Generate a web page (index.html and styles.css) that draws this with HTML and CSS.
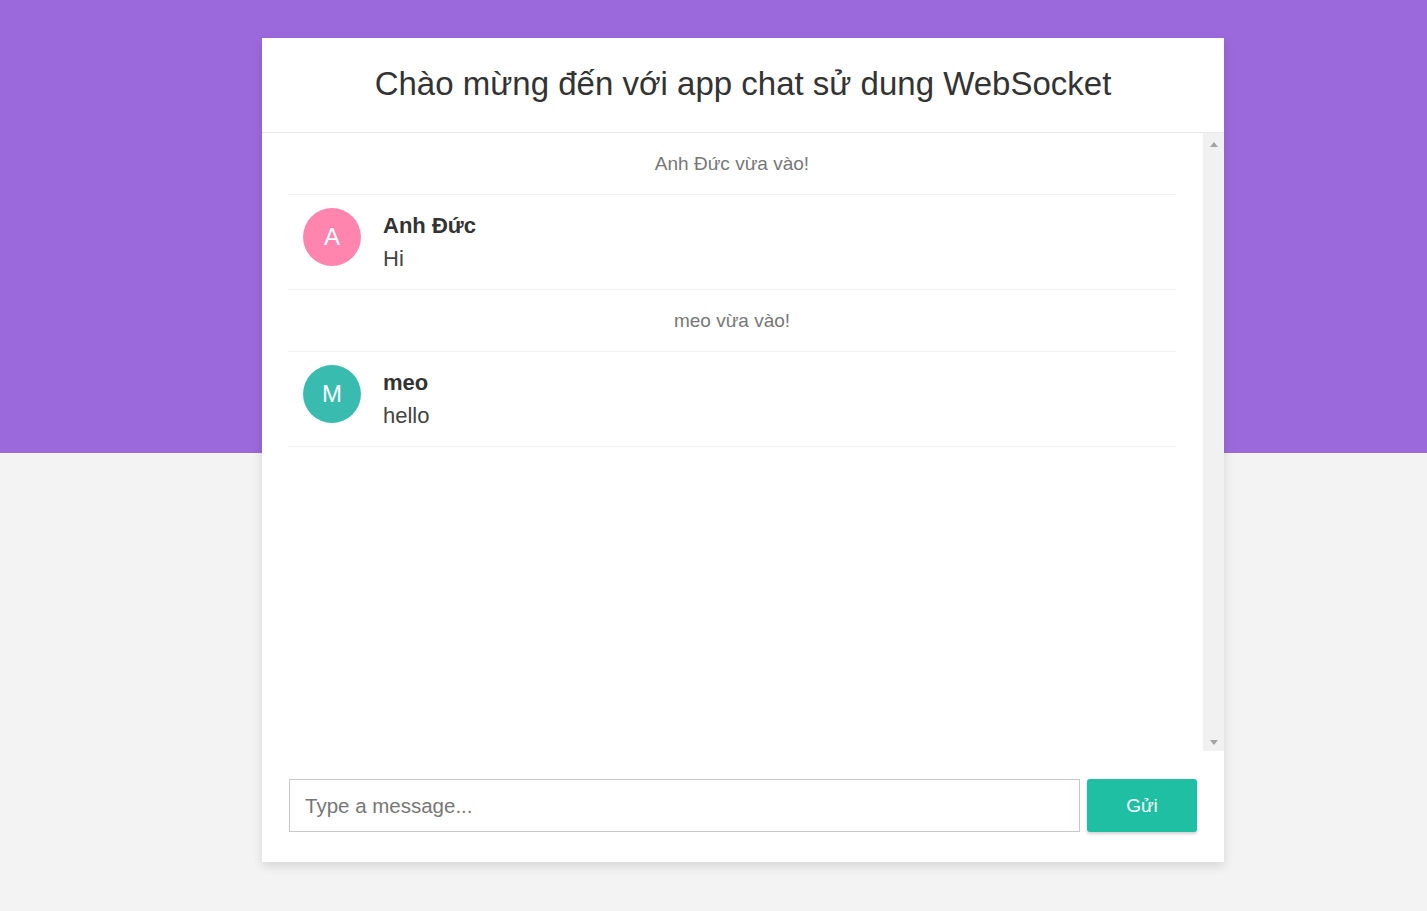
FILE: index.html
```html
<!DOCTYPE html>
<html lang="vi">
<head>
<meta charset="utf-8">
<title>Chat WebSocket</title>
<link rel="stylesheet" href="styles.css">
</head>
<body>
<div class="page">
  <div class="chat-card">
    <div class="chat-header">
      <h1 class="chat-title">Chào mừng đến với app chat sử dung WebSocket</h1>
    </div>
    <div class="chat-body">
      <ul class="message-list">
        <li class="event-message">Anh Đức vừa vào!</li>
        <li class="chat-message">
          <div class="avatar avatar-pink">A</div>
          <div class="message-content">
            <div class="sender">Anh Đức</div>
            <div class="text">Hi</div>
          </div>
        </li>
        <li class="event-message">meo vừa vào!</li>
        <li class="chat-message">
          <div class="avatar avatar-teal">M</div>
          <div class="message-content">
            <div class="sender">meo</div>
            <div class="text">hello</div>
          </div>
        </li>
      </ul>
      <div class="scrollbar">
        <span class="arrow arrow-up"></span>
        <span class="arrow arrow-down"></span>
      </div>
    </div>
    <form class="chat-form">
      <input class="message-input" type="text" placeholder="Type a message...">
      <button class="send-button" type="button">Gửi</button>
    </form>
  </div>
</div>
</body>
</html>
```

FILE: styles.css
```css
* {
  box-sizing: border-box;
}

html, body {
  margin: 0;
  padding: 0;
  height: 100%;
}

body {
  font-family: "Liberation Sans", Arial, sans-serif;
  color: #333;
  background: linear-gradient(to bottom, #9c69dd 0, #9c69dd 453px, #f3f3f3 453px, #f3f3f3 100%);
  overflow: hidden;
}

.page {
  display: flex;
  justify-content: center;
  padding: 38px 0 0 59px;
}

.chat-card {
  width: 962px;
  height: 824px;
  background: #fff;
  display: flex;
  flex-direction: column;
  box-shadow: 0 4px 10px rgba(0, 0, 0, 0.12);
}

.chat-header {
  height: 95px;
  border-bottom: 1px solid #e8e8e8;
  display: flex;
  align-items: center;
  justify-content: center;
  flex-shrink: 0;
}

.chat-title {
  margin: 0;
  font-size: 33px;
  font-weight: normal;
  color: #333;
  padding-bottom: 2px;
}

.chat-body {
  height: 618px;
  display: flex;
  flex-shrink: 0;
}

.message-list {
  flex: 1;
  list-style: none;
  margin: 0;
  padding: 0 27px 0 26px;
}

.event-message {
  padding: 20px 0;
  line-height: 21px;
  font-size: 19px;
  color: #777;
  text-align: center;
  border-bottom: 1px solid #efefef;
}

.chat-message {
  display: flex;
  align-items: flex-start;
  padding: 13px 15px 14px;
  border-bottom: 1px solid #efefef;
}

.avatar {
  width: 58px;
  height: 58px;
  border-radius: 50%;
  color: #fff;
  font-size: 24px;
  display: flex;
  align-items: center;
  justify-content: center;
  flex-shrink: 0;
  margin-right: 22px;
}

.avatar-pink {
  background: #ff85af;
}

.avatar-teal {
  background: #39bbb0;
}

.message-content {
  display: flex;
  flex-direction: column;
  padding-top: 2px;
}

.sender {
  font-size: 22px;
  font-weight: bold;
  line-height: 32px;
  color: #333;
}

.text {
  font-size: 22px;
  line-height: 32px;
  margin-top: 1px;
  color: #444;
}

.scrollbar {
  width: 21px;
  background: #f1f1f1;
  display: flex;
  flex-direction: column;
  justify-content: space-between;
  align-items: center;
  padding: 9px 0 6px;
}

.arrow {
  width: 0;
  height: 0;
  border-left: 4px solid transparent;
  border-right: 4px solid transparent;
}

.arrow-up {
  border-bottom: 5px solid #a3a3a3;
}

.arrow-down {
  border-top: 5px solid #a3a3a3;
}

.chat-form {
  flex: 1;
  margin: 0;
  display: flex;
  gap: 7px;
  padding: 28px 27px 30px;
}

.message-input {
  flex: 1;
  height: 53px;
  border: 1px solid #c8c8c8;
  padding: 0 15px;
  font-family: "Liberation Sans", Arial, sans-serif;
  font-size: 20.5px;
  color: #333;
  outline: none;
  border-radius: 0;
}

.message-input::placeholder {
  color: #777;
}

.send-button {
  width: 110px;
  height: 53px;
  border: none;
  border-radius: 3px;
  background: #1ebfa3;
  color: #fff;
  font-family: "Liberation Sans", Arial, sans-serif;
  font-size: 19px;
  box-shadow: 0 2px 3px rgba(0, 0, 0, 0.18);
  cursor: pointer;
}
```
